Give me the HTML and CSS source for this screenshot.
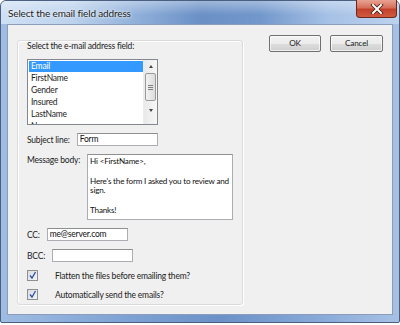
FILE: index.html
```html
<!DOCTYPE html>
<html lang="en">
<head>
    <meta charset="UTF-8">
    <title>Select the email field address</title>
    <link rel="stylesheet" href="styles.css">
</head>
<body>
    <div class="window">
        <div class="titlebar">
            <span class="title">Select the email field address</span>
            <div class="close-btn">
                <svg width="14" height="10" viewBox="0 0 14 10">
                    <path d="M3 1 L11 9 M11 1 L3 9" stroke="#4a1a12" stroke-width="3.6" stroke-linecap="square"/>
                    <path d="M3 1 L11 9 M11 1 L3 9" stroke="#fff" stroke-width="2" stroke-linecap="square"/>
                </svg>
            </div>
        </div>
        <div class="client">
            <div class="group">
                <div class="caption">Select the e-mail address field:</div>
                <div class="listbox">
                    <ul class="items">
                        <li class="selected">Email</li>
                        <li>FirstName</li>
                        <li>Gender</li>
                        <li>Insured</li>
                        <li>LastName</li>
                        <li>Name</li>
                    </ul>
                    <div class="scrollbar">
                        <div class="arrow up"></div>
                        <div class="thumb">
                            <span></span><span></span><span></span>
                        </div>
                        <div class="arrow down"></div>
                    </div>
                </div>

                <div class="row subject-row">
                    <label>Subject line:</label>
                    <div class="field subject">Form</div>
                </div>

                <div class="row message-row">
                    <label>Message body:</label>
                    <div class="field textarea">Hi &lt;FirstName&gt;,<br><br>Here's the form I asked you to review and<br>sign.<br><br>Thanks!</div>
                </div>

                <div class="row cc-row">
                    <label>CC:</label>
                    <div class="field cc">me@server.com</div>
                </div>

                <div class="row bcc-row">
                    <label>BCC:</label>
                    <div class="field bcc"></div>
                </div>

                <div class="check-row first">
                    <span class="checkbox">
                        <svg width="9" height="9" viewBox="0 0 9 9"><path d="M2 4.5 L4 7 L7.5 1" fill="none" stroke="#2b4ea0" stroke-width="1.3"/></svg>
                    </span>
                    <span>Flatten the files before emailing them?</span>
                </div>
                <div class="check-row">
                    <span class="checkbox">
                        <svg width="9" height="9" viewBox="0 0 9 9"><path d="M2 4.5 L4 7 L7.5 1" fill="none" stroke="#2b4ea0" stroke-width="1.3"/></svg>
                    </span>
                    <span>Automatically send the emails?</span>
                </div>
            </div>

            <div class="buttons">
                <div class="btn">OK</div>
                <div class="btn">Cancel</div>
            </div>
        </div>
    </div>
</body>
</html>
```

FILE: styles.css
```css
body {
    margin: 0;
    padding: 0;
    background-color: #fff;
    font-family: Lato, "Open Sans", sans-serif;
}

.window {
    position: relative;
    width: 400px;
    height: 323px;
    box-sizing: border-box;
    padding: 0 6px 7px 6px;
    border: 1px solid #4b5f80;
    border-radius: 6px 6px 2px 2px;
    background: linear-gradient(90deg, #9fbce2 0%, #7fa3d4 30%, #6b91c8 55%, #89aad8 80%, #a7c1e5 100%);
    display: flex;
    flex-direction: column;
}

.titlebar {
    height: 23px;
    margin: 0 -6px;
    padding: 0 7px;
    display: flex;
    align-items: center;
    border-radius: 5px 5px 0 0;
    background:
        linear-gradient(180deg, rgba(255, 255, 255, 0.35) 0%, rgba(255, 255, 255, 0) 60%),
        linear-gradient(90deg, #cfe0f3 0%, #bcd2ed 18%, #8eaed9 35%, #6a90c6 50%, #7197cb 65%, #a6c1e6 82%, #bcd2ee 100%);
}

.title {
    font-size: 10px;
    letter-spacing: -0.15px;
    color: #1a1a1a;
    text-shadow: 0 0 4px rgba(255, 255, 255, 0.9), 0 0 2px rgba(255, 255, 255, 0.9);
    margin-top: 1px;
}

.close-btn {
    position: absolute;
    top: -1px;
    right: 2px;
    width: 41px;
    height: 18px;
    box-sizing: border-box;
    border: 1px solid #6e2619;
    border-top: none;
    border-radius: 0 0 4px 4px;
    background: linear-gradient(180deg, #e7a393 0%, #d5705a 45%, #c3412a 55%, #cf5a3f 100%);
    display: flex;
    justify-content: center;
    align-items: center;
}

.client {
    flex: 1;
    background-color: #f0f0f0;
    border: 1px solid #8b9dba;
    display: flex;
    align-items: flex-start;
    padding: 15px 9px 0 9px;
    font-size: 8.5px;
    letter-spacing: -0.2px;
    color: #222;
}

.group {
    width: 226px;
    height: 265px;
    box-sizing: border-box;
    border: 1px solid #dcdcdc;
    border-radius: 3px;
    box-shadow: inset 1px 1px 0 #fff, 1px 1px 0 #fff;
    padding: 0 0 0 9px;
    display: flex;
    flex-direction: column;
}

.caption {
    height: 11px;
    line-height: 11px;
    margin-top: 0;
}

.listbox {
    margin-top: 7px;
    width: 131px;
    height: 66px;
    box-sizing: border-box;
    border: 1px solid #828790;
    background-color: #fff;
    display: flex;
    overflow: hidden;
}

.items {
    list-style: none;
    margin: 0;
    padding: 1px 0 0 1px;
    flex: 1;
}

.items li {
    height: 12px;
    line-height: 11px;
    padding-left: 2px;
    color: #222;
}

.items li.selected {
    background-color: #3399ff;
    color: #fff;
    height: 11px;
    margin-bottom: 1px;
}

.scrollbar {
    width: 13px;
    background: linear-gradient(90deg, #e9e9e9, #f7f7f7);
    border-left: 1px solid #ececec;
    display: flex;
    flex-direction: column;
    align-items: center;
}

.arrow {
    width: 0;
    height: 0;
    border-left: 2.5px solid transparent;
    border-right: 2.5px solid transparent;
}

.arrow.up {
    border-bottom: 3px solid #444;
    margin-top: 5px;
}

.arrow.down {
    border-top: 3px solid #444;
    margin-top: 8px;
}

.thumb {
    margin-top: 5px;
    width: 11px;
    height: 28px;
    box-sizing: border-box;
    border: 1px solid #9a9a9a;
    border-radius: 2px;
    background: linear-gradient(90deg, #f2f2f2, #dcdcdc);
    display: flex;
    flex-direction: column;
    justify-content: center;
    align-items: center;
    gap: 1px;
}

.thumb span {
    width: 5px;
    height: 1px;
    background-color: #7d7d7d;
}

.row {
    display: flex;
    align-items: center;
    gap: 7px;
}

.row label {
    line-height: 10px;
}

.field {
    box-sizing: border-box;
    border: 1px solid #abadb3;
    border-top-color: #8e8f8f;
    background-color: #fff;
    color: #111;
    padding: 0 2px;
    line-height: 11px;
}

.subject-row {
    margin-top: 8px;
}

.subject {
    width: 81px;
    height: 13px;
}

.message-row {
    margin-top: 8px;
    align-items: flex-start;
}

.message-row label {
    margin-top: 1px;
}

.textarea {
    width: 146px;
    height: 66px;
    padding: 2px 0 2px 2px;
    font-size: 8.1px;
    line-height: 9.8px;
    white-space: nowrap;
}

.cc-row {
    margin-top: 8px;
}

.cc {
    width: 81px;
    height: 13px;
}

.bcc-row {
    margin-top: 8px;
}

.bcc {
    width: 81px;
    height: 13px;
}

.check-row {
    display: flex;
    align-items: center;
    gap: 17px;
    margin-top: 8px;
}

.check-row.first {
    margin-top: 8px;
}

.checkbox {
    width: 11px;
    height: 11px;
    box-sizing: border-box;
    border: 1px solid #8f8f8f;
    background: linear-gradient(135deg, #d9dce3, #f4f4f6);
    display: flex;
    justify-content: center;
    align-items: center;
}

.buttons {
    display: flex;
    gap: 9px;
    margin-left: auto;
    margin-top: -5px;
}

.btn {
    height: 17px;
    box-sizing: border-box;
    border: 1px solid #707070;
    border-radius: 2px;
    background: linear-gradient(180deg, #f2f2f2 0%, #ebebeb 50%, #dddddd 51%, #cfcfcf 100%);
    box-shadow: inset 0 0 0 1px rgba(255, 255, 255, 0.7);
    text-align: center;
    line-height: 15px;
    font-size: 8.2px;
    color: #222;
}

.btn:first-child {
    width: 52px;
}

.btn:last-child {
    width: 53px;
}
```
